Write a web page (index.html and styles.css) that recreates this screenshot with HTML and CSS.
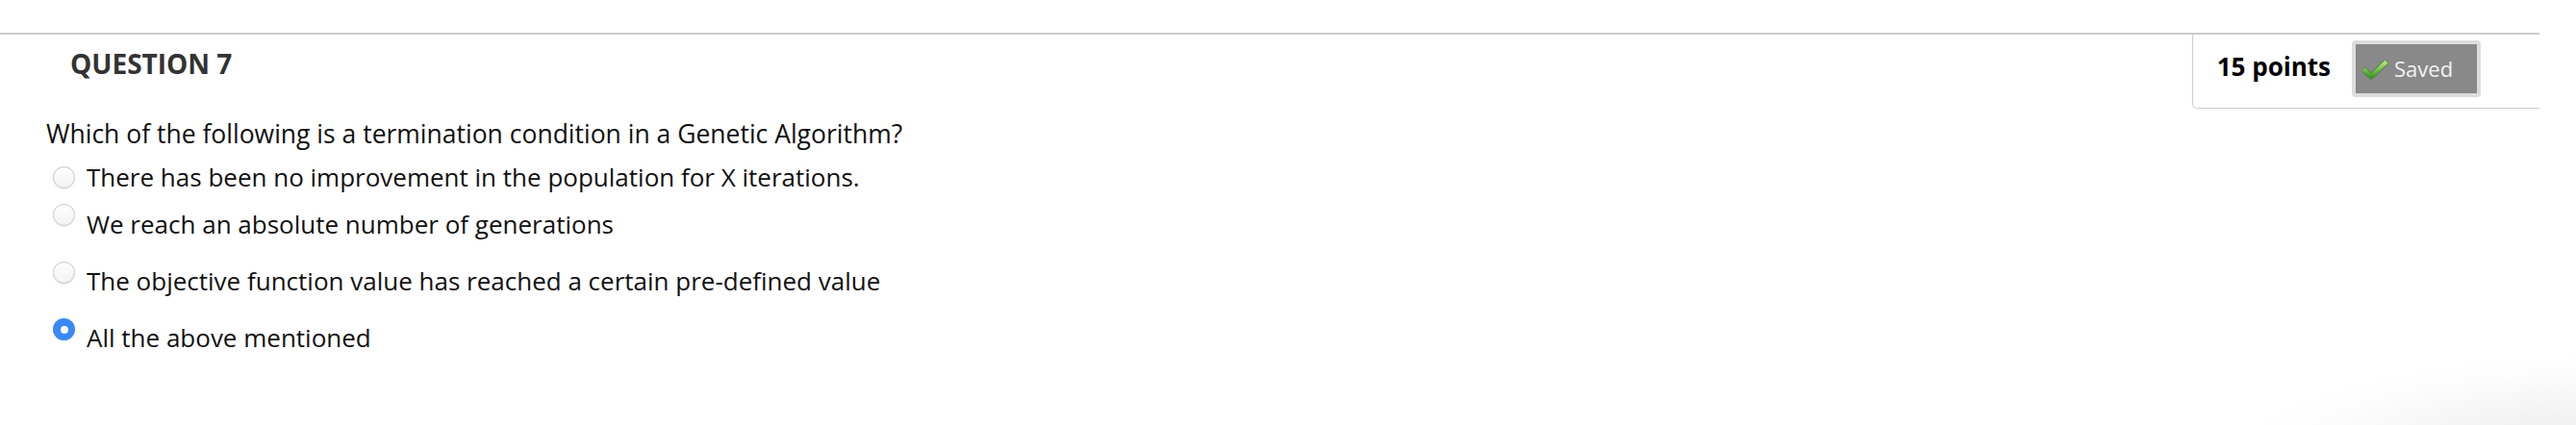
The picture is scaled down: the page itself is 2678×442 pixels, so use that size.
FILE: index.html
```html
<!DOCTYPE html>
<html lang="en">
<head>
<meta charset="utf-8">
<title>Question 7</title>
<link rel="stylesheet" href="styles.css">
</head>
<body>
<div class="page">
  <div class="question">
    <div class="main">
      <h2 class="title">QUESTION 7</h2>
      <p class="prompt">Which of the following is a termination condition in a Genetic Algorithm?</p>
      <div class="options">
        <div class="opt opt-first"><span class="radio"></span><span class="label">There has been no improvement in the population for X iterations.</span></div>
        <div class="opt opt-second"><span class="radio"></span><span class="label">We reach an absolute number of generations</span></div>
        <div class="opt opt-rest"><span class="radio"></span><span class="label">The objective function value has reached a certain pre-defined value</span></div>
        <div class="opt opt-rest"><span class="radio checked"></span><span class="label">All the above mentioned</span></div>
      </div>
    </div>
    <div class="points-box">
      <span class="points">15 points</span>
      <span class="saved">
        <svg class="check" width="26" height="20" viewBox="0 0 26 20">
          <defs>
            <linearGradient id="g" x1="0" y1="0" x2="0" y2="1">
              <stop offset="0" stop-color="#a6e86e"/>
              <stop offset="1" stop-color="#3f9b26"/>
            </linearGradient>
          </defs>
          <path d="M2.5 10 L9 16.5 L23.5 2.5" fill="none" stroke="#3c6e2a" stroke-width="6.5" stroke-linecap="round" stroke-linejoin="round" opacity="0.55"/>
          <path d="M2.5 10 L9 16.5 L23.5 2.5" fill="none" stroke="url(#g)" stroke-width="4.5" stroke-linecap="round" stroke-linejoin="round"/>
        </svg>
        <span class="saved-text">Saved</span>
      </span>
    </div>
  </div>
</div>
</body>
</html>
```
FILE: styles.css
```css
html, body {
  margin: 0;
  padding: 0;
  height: 100%;
}
body {
  font-family: "Open Sans", "Liberation Sans", sans-serif;
  color: #111;
  background: #fff radial-gradient(ellipse 430px 115px at 2740px 480px, #ebebeb 0%, #f2f2f2 45%, #fdfdfd 85%, #fff 100%) no-repeat;
}
.page {
  width: 2640px;
  padding-top: 34px;
}
.question {
  display: flex;
  justify-content: space-between;
  align-items: flex-start;
  border-top: 2px solid #cccccc;
}
.main {
  padding-left: 48px;
}
.title {
  margin: 11px 0 0 25px;
  font-size: 28px;
  line-height: 38px;
  font-weight: 700;
  color: #333;
}
.prompt {
  margin: 38px 0 0 0;
  font-size: 26.5px;
  line-height: 32px;
  color: #111;
}
.options {
  padding-left: 7px;
}
.opt {
  display: flex;
  align-items: flex-start;
  gap: 12px;
  font-size: 26px;
  line-height: 32px;
  color: #111;
}
.opt-first {
  margin-top: 13px;
}
.opt-first .radio {
  margin-top: 5px;
}
.opt-second {
  margin-top: 12px;
}
.opt-second .label {
  padding-top: 5px;
}
.opt-rest {
  margin-top: 23px;
}
.opt-rest .label {
  padding-top: 4px;
}
.radio {
  flex: none;
  width: 23px;
  height: 23px;
  box-sizing: border-box;
  border-radius: 50%;
  border: 1px solid #c4c4c4;
  background: linear-gradient(#ffffff, #f2f2f2);
  box-shadow: inset 0 1px 1px rgba(255,255,255,0.9), 0 1px 1px rgba(0,0,0,0.07);
  position: relative;
}
.radio.checked {
  border: none;
  background: #3a88f4;
  box-shadow: none;
}
.radio.checked::after {
  content: "";
  position: absolute;
  left: 7.5px;
  top: 7.5px;
  width: 8px;
  height: 8px;
  border-radius: 50%;
  background: #fff;
}
.points-box {
  display: flex;
  align-items: flex-start;
  gap: 22px;
  padding: 6px 61px 11px 25px;
  border-left: 1px solid #cfcfcf;
  border-bottom: 1px solid #cfcfcf;
  border-bottom-left-radius: 5px;
  box-shadow: -1px 1px 2px rgba(0,0,0,0.04);
}
.points {
  margin-top: 10px;
  font-size: 26px;
  line-height: 34px;
  font-weight: 700;
  color: #000;
}
.saved {
  display: flex;
  align-items: flex-start;
  width: 126px;
  height: 51px;
  border: 4px solid #dcdcdc;
  border-radius: 4px;
  background: #898989;
  box-sizing: content-box;
}
.check {
  margin: 17px 0 0 7px;
}
.saved-text {
  margin: 10px 0 0 7px;
  font-size: 22px;
  line-height: 30px;
  color: #f2f2f2;
}
```
